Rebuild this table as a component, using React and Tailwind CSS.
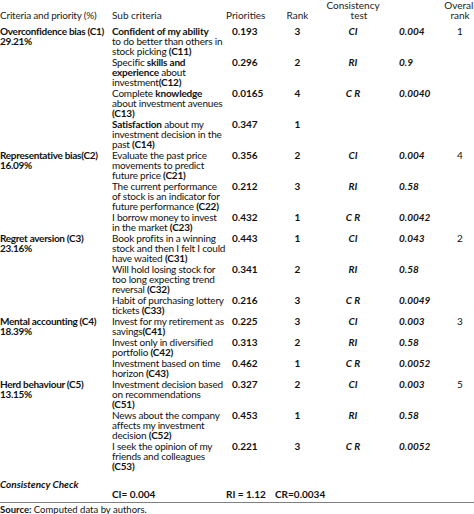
import React from "react";

const groups = [
  {
    name: "Overconfidence bias (C1)",
    pct: "29.21%",
    overall: "1",
    rows: [
      { lines: [<b>Confident of my ability</b>, "to do better than others in", <>stock picking <b>(C11)</b></>], p: "0.193", r: "3", t: "CI", v: "0.004" },
      { lines: [<>Specific <b>skills and</b></>, <><b>experience</b> about</>, <>investment<b>(C12)</b></>], p: "0.296", r: "2", t: "RI", v: "0.9" },
      { lines: [<>Complete <b>knowledge</b></>, "about investment avenues", <b>(C13)</b>], p: "0.0165", r: "4", t: "C R", v: "0.0040" },
      { lines: [<><b>Satisfaction</b> about my</>, "investment decision in the", <>past <b>(C14)</b></>], p: "0.347", r: "1" },
    ],
  },
  {
    name: "Representative bias(C2)",
    pct: "16.09%",
    overall: "4",
    rows: [
      { lines: ["Evaluate the past price", "movements to predict", <>future price <b>(C21)</b></>], p: "0.356", r: "2", t: "CI", v: "0.004" },
      { lines: ["The current performance", "of stock is an indicator for", <>future performance <b>(C22)</b></>], p: "0.212", r: "3", t: "RI", v: "0.58" },
      { lines: ["I borrow money to invest", <>in the market <b>(C23)</b></>], p: "0.432", r: "1", t: "C R", v: "0.0042" },
    ],
  },
  {
    name: "Regret aversion (C3)",
    pct: "23.16%",
    overall: "2",
    rows: [
      { lines: ["Book profits in a winning", "stock and then I felt I could", <>have waited <b>(C31)</b></>], p: "0.443", r: "1", t: "CI", v: "0.043" },
      { lines: ["Will hold losing stock for", "too long expecting trend", <>reversal <b>(C32)</b></>], p: "0.341", r: "2", t: "RI", v: "0.58" },
      { lines: ["Habit of purchasing lottery", <>tickets <b>(C33)</b></>], p: "0.216", r: "3", t: "C R", v: "0.0049" },
    ],
  },
  {
    name: "Mental accounting (C4)",
    pct: "18.39%",
    overall: "3",
    rows: [
      { lines: ["Invest for my retirement as", <>savings<b>(C41)</b></>], p: "0.225", r: "3", t: "CI", v: "0.003" },
      { lines: ["Invest only in diversified", <>portfolio <b>(C42)</b></>], p: "0.313", r: "2", t: "RI", v: "0.58" },
      { lines: ["Investment based on time", <>horizon <b>(C43)</b></>], p: "0.462", r: "1", t: "C R", v: "0.0052" },
    ],
  },
  {
    name: "Herd behaviour (C5)",
    pct: "13.15%",
    overall: "5",
    rows: [
      { lines: ["Investment decision based", "on recommendations", <b>(C51)</b>], p: "0.327", r: "2", t: "CI", v: "0.003" },
      { lines: ["News about the company", "affects my investment", <>decision <b>(C52)</b></>], p: "0.453", r: "1", t: "RI", v: "0.58" },
      { lines: ["I seek the opinion of my", "friends and colleagues", <b>(C53)</b>], p: "0.221", r: "3", t: "C R", v: "0.0052" },
    ],
  },
];

const cols = "grid grid-cols-[112px_114px_49px_45px_66px_54px_40px]";

export default function App() {
  return (
    <div
      className="w-[474px] h-[514px] overflow-hidden bg-white text-[#111] text-[10px] leading-[10px]"
      style={{ fontFamily: "Lato, 'Open Sans', sans-serif" }}
    >
      <div className={`${cols} items-end pb-[5px] text-[#222]`}>
        <div className="whitespace-nowrap tracking-[-0.2px]">Criteria and priority (%)</div>
        <div>Sub criteria</div>
        <div>Priorities</div>
        <div className="text-center">Rank</div>
        <div className="text-center">
          <div>Consistency</div>
          <div className="pl-[12px]">test</div>
        </div>
        <div />
        <div className="text-center">
          <div>Overall</div>
          <div>rank</div>
        </div>
      </div>

      {groups.map((g) =>
        g.rows.map((row, i) => (
          <div key={g.name + i} className={`${cols} pt-px`}>
            <div className="font-bold whitespace-nowrap tracking-[-0.3px]">
              {i === 0 && (
                <>
                  <div>{g.name}</div>
                  <div>{g.pct}</div>
                </>
              )}
            </div>
            <div className="whitespace-nowrap tracking-[-0.2px]">
              {row.lines.map((l, k) => (
                <div key={k}>{l}</div>
              ))}
            </div>
            <div className="pl-[6px] font-bold">{row.p}</div>
            <div className="text-center font-bold">{row.r}</div>
            <div className="text-center font-bold italic">{row.t}</div>
            <div className="pl-[13px] font-bold italic">{row.v}</div>
            <div className="text-center">{i === 0 ? g.overall : ""}</div>
          </div>
        ))
      )}

      <div className={`${cols} mt-[8px]`}>
        <div className="font-bold italic whitespace-nowrap">Consistency Check</div>
      </div>
      <div className={`${cols} font-bold whitespace-nowrap`}>
        <div />
        <div>CI= 0.004</div>
        <div>RI = 1.12</div>
        <div>CR=0.0034</div>
      </div>
      <div className="mt-[3px] border-t-[1.5px] border-[#808080] pt-[2px] text-[9.5px]">
        <b>Source:</b> Computed data by authors.
      </div>
    </div>
  );
}
